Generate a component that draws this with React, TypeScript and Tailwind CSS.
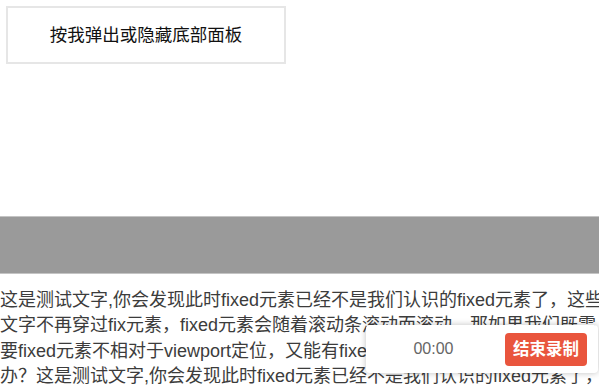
import React from "react";

const lines = [
  "这是测试文字,你会发现此时fixed元素已经不是我们认识的fixed元素了，这些",
  "文字不再穿过fix元素，fixed元素会随着滚动条滚动而滚动，那如果我们既需",
  "要fixed元素不相对于viewport定位，又能有fixed元素的效果，该怎么",
  "办？这是测试文字,你会发现此时fixed元素已经不是我们认识的fixed元素了，",
];

export default function App() {
  return (
    <div
      className="relative w-[599px] h-[386px] overflow-hidden bg-white"
      style={{ fontFamily: '"Liberation Sans", "Noto Sans CJK SC", sans-serif' }}
    >
      <div className="pt-[6px] pl-[6px]">
        <button className="w-[280px] h-[58px] border-2 border-[#e6e6e6] bg-white text-[17.5px] text-[#111] flex items-center justify-center pt-[1px]">
          按我弹出或隐藏底部面板
        </button>
      </div>
      <div className="mt-[152px] h-[58px] bg-[#9a9a9a] border-t border-b border-[#c4c4c4]" />
      <div className="mt-[14px] text-[18px] leading-[25.3px] text-[#3c3c3c]">
        {lines.map((l, i) => (
          <div key={i} className="whitespace-nowrap">
            {l}
          </div>
        ))}
      </div>
      <div className="absolute left-[366px] top-[325px] w-[232px] h-[48px] bg-white rounded-[4px] shadow-[0_0_6px_rgba(0,0,0,0.25)] flex items-center">
        <div className="flex-1 flex justify-center text-[16px] text-[#666] pr-[4px]">00:00</div>
        <div className="mr-[11px] w-[82px] h-[33px] rounded-[4px] bg-[#e9553d] text-white text-[16.5px] font-bold flex items-center justify-center">
          结束录制
        </div>
      </div>
    </div>
  );
}
